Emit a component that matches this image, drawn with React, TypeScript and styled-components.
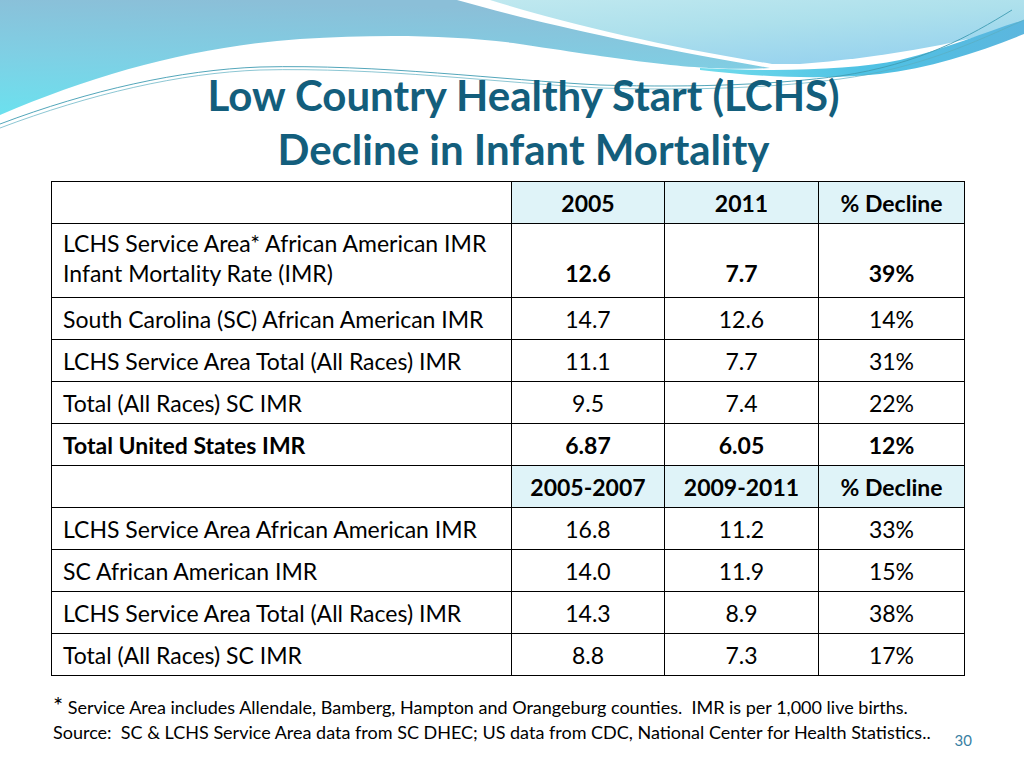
import React from "react";
import styled, { createGlobalStyle } from "styled-components";

const Global = createGlobalStyle`
  html, body { margin: 0; padding: 0; background: #ffffff; }
  body { font-family: Lato, "Open Sans", sans-serif; color: #000; }
`;

const Slide = styled.div`
  position: relative;
  width: 1024px;
  height: 768px;
  overflow: hidden;
  background: #ffffff;
`;

const Wave = styled.svg`
  position: absolute;
  left: 0;
  top: 0;
  z-index: 0;
`;

const Content = styled.div`
  position: relative;
  z-index: 1;
  display: flex;
  flex-direction: column;
  padding: 68px 60px 0 51px;
`;

const Title = styled.h1`
  margin: 0 0 5px 0;
  padding-left: 32px;
  font-family: Lato, "Open Sans", sans-serif;
  font-weight: 700;
  font-size: 42px;
  line-height: 54px;
  color: #135e7c;
  text-align: center;
`;

const Table = styled.table`
  width: 913px;
  border-collapse: collapse;
  table-layout: fixed;
  font-family: Lato, "Open Sans", sans-serif;
  font-size: 23px;
`;

const Row = styled.tr<{ $h?: number }>`
  height: ${(p) => p.$h ?? 42}px;
`;

const LabelCell = styled.td<{ $bold?: boolean; $tall?: boolean }>`
  border: 1px solid #000;
  padding: ${(p) => (p.$tall ? "0 6px 5px 11px" : "0 6px 0 11px")};
  line-height: 30px;
  font-weight: ${(p) => (p.$bold ? 700 : 400)};
  vertical-align: middle;
  white-space: nowrap;
`;

const HeadCell = styled.td`
  border: 1px solid #000;
  background: #dff3f8;
  text-align: center;
  font-weight: 700;
  vertical-align: middle;
`;

const ValueCell = styled.td<{ $bold?: boolean; $bottom?: boolean }>`
  border: 1px solid #000;
  text-align: center;
  line-height: 30px;
  font-weight: ${(p) => (p.$bold ? 700 : 400)};
  vertical-align: ${(p) => (p.$bottom ? "bottom" : "middle")};
  padding: ${(p) => (p.$bottom ? "0 0 9px 0" : "0")};
`;

const Footer = styled.div`
  display: flex;
  justify-content: space-between;
  align-items: flex-start;
  margin-top: 16px;
  padding-left: 2px;
`;

const Notes = styled.div`
  font-family: Lato, "Open Sans", sans-serif;
  font-size: 18px;
  line-height: 25px;
  color: #000;
  white-space: nowrap;
`;

const Star = styled.span`
  font-size: 24px;
`;

const PageNum = styled.div`
  font-family: Lato, "Open Sans", sans-serif;
  font-size: 15px;
  color: #3a7fa3;
  padding-top: 39px;
  margin-right: -8px;
`;

type DataRow = { label: string; v: [string, string, string]; bold?: boolean };

const rows1: DataRow[] = [
  { label: "South Carolina (SC) African American IMR", v: ["14.7", "12.6", "14%"] },
  { label: "LCHS Service Area Total (All Races) IMR", v: ["11.1", "7.7", "31%"] },
  { label: "Total (All Races) SC IMR", v: ["9.5", "7.4", "22%"] },
  { label: "Total United States IMR", v: ["6.87", "6.05", "12%"], bold: true },
];

const rows2: DataRow[] = [
  { label: "LCHS Service Area African American IMR", v: ["16.8", "11.2", "33%"] },
  { label: "SC African American IMR", v: ["14.0", "11.9", "15%"] },
  { label: "LCHS Service Area Total (All Races) IMR", v: ["14.3", "8.9", "38%"] },
  { label: "Total (All Races) SC IMR", v: ["8.8", "7.3", "17%"] },
];

const DataRows = ({ rows }: { rows: DataRow[] }) => (
  <>
    {rows.map((r) => (
      <Row key={r.label}>
        <LabelCell $bold={r.bold}>{r.label}</LabelCell>
        {r.v.map((x, i) => (
          <ValueCell key={i} $bold={r.bold}>
            {x}
          </ValueCell>
        ))}
      </Row>
    ))}
  </>
);

const WaveArt = () => (
  <Wave width={1024} height={140} viewBox="0 0 1024 140">
    <defs>
      <linearGradient id="gA" x1="0.3" y1="0" x2="0.1" y2="1">
        <stop offset="0" stopColor="#8bbfd8" />
        <stop offset="0.5" stopColor="#7fcfe4" />
        <stop offset="1" stopColor="#6ce0ee" />
      </linearGradient>
      <linearGradient id="gB" x1="0" y1="0" x2="0.6" y2="1">
        <stop offset="0" stopColor="#bfe8ef" />
        <stop offset="0.5" stopColor="#ade0ec" />
        <stop offset="1" stopColor="#98d3ee" />
      </linearGradient>
      <linearGradient id="gC" x1="0" y1="0" x2="1" y2="0">
        <stop offset="0" stopColor="#72dcec" />
        <stop offset="0.5" stopColor="#4ec2e4" />
        <stop offset="1" stopColor="#5cb6de" />
      </linearGradient>
    </defs>
    <path
      d="M0,0 H457 C520,18 620,42 770,68 C700,72 640,62 513,43 C450,35 380,34 300,39 C200,46 100,72 0,115 Z"
      fill="url(#gA)"
    />
    <path
      d="M490,0 H1024 V24 C960,44 880,58 800,64 L772,64 C660,46 560,22 490,0 Z"
      fill="url(#gB)"
    />
    <path
      d="M700,68 C780,72 850,70 900,60 C950,48 990,30 1024,20 V34 C980,52 930,68 880,74 C820,80 760,77 700,70 Z"
      fill="url(#gC)"
    />
    <path
      d="M0,124 C90,90 180,70 260,67 C380,64 500,80 600,85 C700,88 780,84 840,76 C920,64 970,36 1012,10"
      stroke="#3f9cb2"
      strokeWidth="0.9"
      fill="none"
    />
    <path
      d="M0,128 C90,94 180,73 260,70 C380,67 500,83 600,88 C700,91 780,87 840,79 C920,68 975,42 1024,20"
      stroke="#5aaec0"
      strokeWidth="0.7"
      fill="none"
    />
  </Wave>
);

export default function App() {
  return (
    <>
      <Global />
      <Slide>
        <WaveArt />
        <Content>
          <Title>
            Low Country Healthy Start (LCHS)
            <br />
            Decline in Infant Mortality
          </Title>
          <Table>
            <colgroup>
              <col style={{ width: 460 }} />
              <col style={{ width: 153 }} />
              <col style={{ width: 154 }} />
              <col style={{ width: 146 }} />
            </colgroup>
            <tbody>
              <Row>
                <LabelCell />
                <HeadCell>2005</HeadCell>
                <HeadCell>2011</HeadCell>
                <HeadCell>% Decline</HeadCell>
              </Row>
              <Row $h={74}>
                <LabelCell $tall>
                  LCHS Service Area* African American IMR
                  <br />
                  Infant Mortality Rate (IMR)
                </LabelCell>
                <ValueCell $bold $bottom>12.6</ValueCell>
                <ValueCell $bold $bottom>7.7</ValueCell>
                <ValueCell $bold $bottom>39%</ValueCell>
              </Row>
              <DataRows rows={rows1} />
              <Row>
                <LabelCell />
                <HeadCell>2005-2007</HeadCell>
                <HeadCell>2009-2011</HeadCell>
                <HeadCell>% Decline</HeadCell>
              </Row>
              <DataRows rows={rows2} />
            </tbody>
          </Table>
          <Footer>
            <Notes>
              <Star>*</Star> Service Area includes Allendale, Bamberg, Hampton and Orangeburg
              counties.&nbsp; IMR is per 1,000 live births.
              <br />
              Source:&nbsp; SC &amp; LCHS Service Area data from SC DHEC; US data from CDC, National
              Center for Health Statistics..
            </Notes>
            <PageNum>30</PageNum>
          </Footer>
        </Content>
      </Slide>
    </>
  );
}
